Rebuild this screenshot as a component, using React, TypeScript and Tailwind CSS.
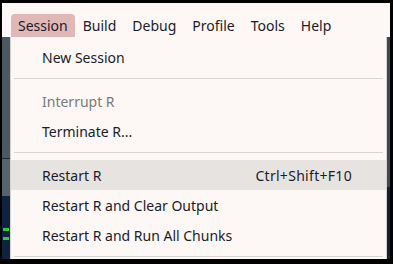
import React from "react";

const topMenus = ["Session", "Build", "Debug", "Profile", "Tools", "Help"];

function Item({ label, shortcut, disabled, active }: { label: string; shortcut?: string; disabled?: boolean; active?: boolean }) {
  return (
    <div
      className={`flex h-[30px] shrink-0 items-center justify-between pl-[31px] pr-[34px] ${active ? "bg-[#e7e3e1]" : ""} ${disabled ? "text-[#7b7a7a]" : "text-[#1b1b2a]"}`}
    >
      <span>{label}</span>
      {shortcut && <span className="tracking-[0.3px]">{shortcut}</span>}
    </div>
  );
}

function Sep() {
  return <div className="mx-[3px] mb-[7px] mt-[6px] h-px shrink-0 bg-[#d9d5d3]" />;
}

export default function App() {
  return (
    <div
      className="flex h-[264px] w-[393px] flex-col overflow-hidden bg-black pb-[5px] pl-[2px] pr-[3px] pt-[3px] text-[14px]"
      style={{ fontFamily: '"Noto Sans", "Open Sans", sans-serif' }}
    >
      {/* menu bar */}
      <div className="flex h-[34px] shrink-0 items-end bg-[#fdf8f5] pl-[9px]">
        {topMenus.map((m, i) => (
          <div
            key={m}
            className={`flex h-[23px] items-center rounded-t-[4px] text-[#1b1b2a] ${i === 0 ? "bg-[#e0b8b8] px-[7px]" : "px-[8px]"}`}
          >
            {m}
          </div>
        ))}
      </div>

      <div className="flex min-h-0 flex-1 overflow-hidden">
        {/* left editor strip */}
        <div className="flex w-[8px] flex-col">
          <div className="h-[121px] shrink-0 bg-[#4b5963]" />
          <div className="h-px shrink-0 bg-[#1e2a33]" />
          <div className="h-[37px] shrink-0 bg-[#56636c]" />
          <div className="flex flex-1 flex-col bg-[#0e2340]">
            <div className="ml-px mt-[32px] h-[3px] w-[6px] bg-[#2ecc2e]" />
            <div className="ml-px mt-[6px] h-[3px] w-[6px] bg-[#2ecc2e]" />
          </div>
        </div>

        {/* dropdown */}
        <div className="flex flex-1 flex-col border-l border-r border-[#d6d2d0] bg-[#fdf8f5] pt-[5px]">
          <Item label="New Session" />
          <Sep />
          <Item label="Interrupt R" disabled />
          <Item label="Terminate R..." />
          <Sep />
          <Item label="Restart R" shortcut="Ctrl+Shift+F10" active />
          <Item label="Restart R and Clear Output" />
          <Item label="Restart R and Run All Chunks" />
          <Sep />
        </div>

        {/* right strip */}
        <div className="flex w-[3px] flex-col">
          <div className="h-[150px] shrink-0 bg-[#3d4a54]" />
          <div className="flex-1 bg-[#0f2236]" />
        </div>
      </div>
    </div>
  );
}
